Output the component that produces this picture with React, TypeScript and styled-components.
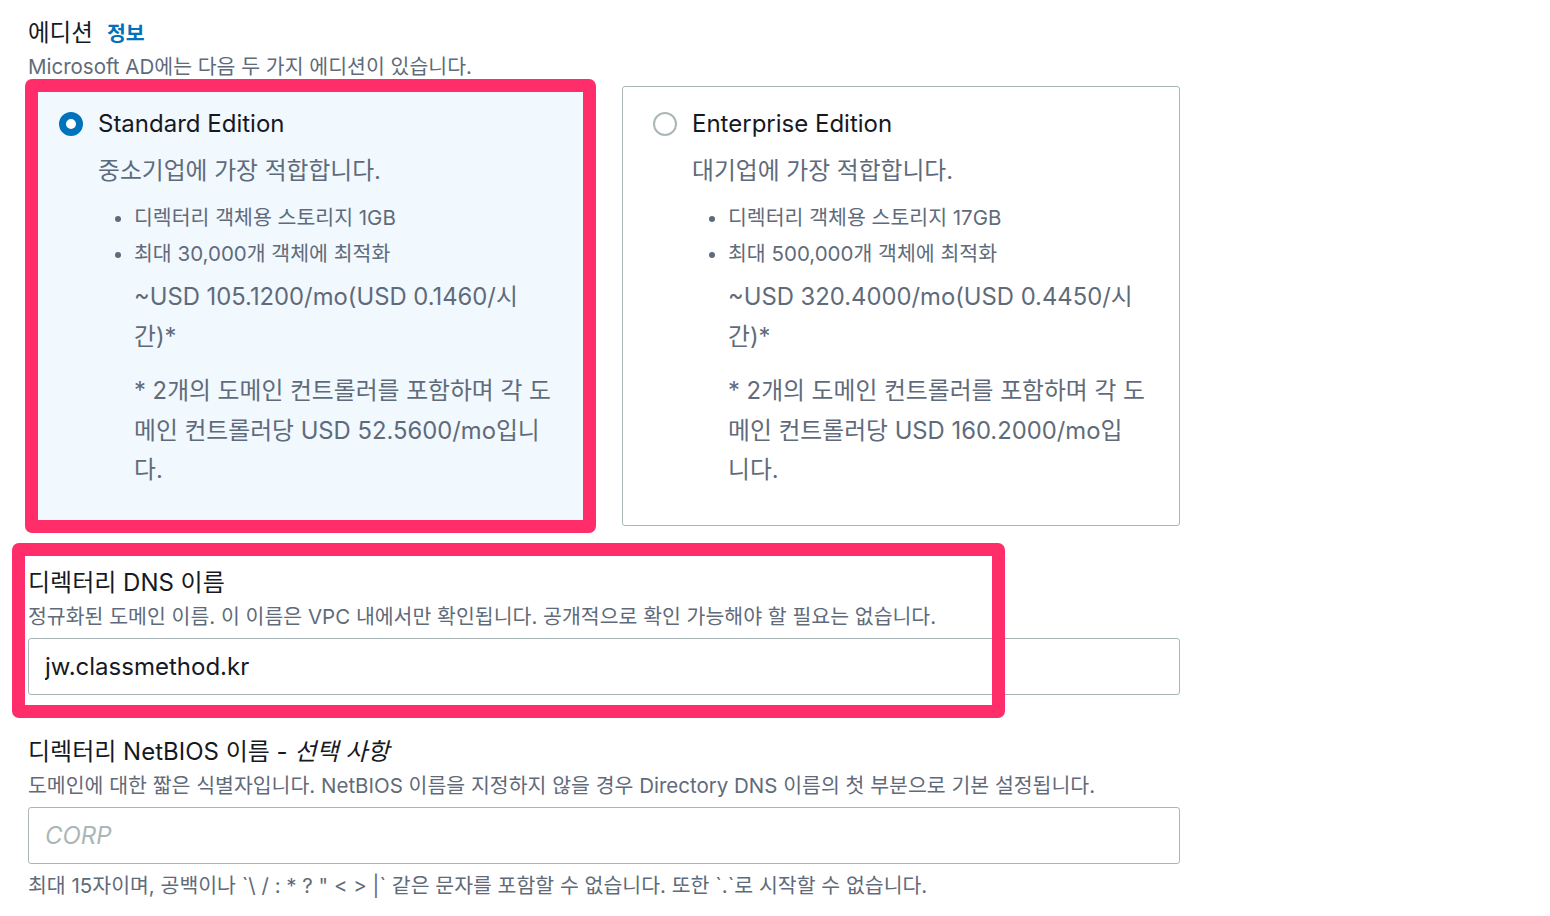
import React from "react";
import styled, { createGlobalStyle } from "styled-components";

const FONT = `"Inter", "Noto Sans CJK KR", sans-serif`;

const GlobalStyle = createGlobalStyle`
  html, body {
    margin: 0;
    padding: 0;
    background: #ffffff;
  }
  body {
    font-family: ${FONT};
    color: #16191f;
  }
  * { box-sizing: border-box; }
`;

const Page = styled.div`
  width: 1550px;
  padding: 18px 0 0 28px;
`;

const Column = styled.div`
  width: 1152px;
  display: flex;
  flex-direction: column;
`;

const HeadingRow = styled.div`
  display: flex;
  align-items: baseline;
  gap: 14px;
  height: 30px;
`;

const Heading = styled.span`
  font-size: 23.5px;
  line-height: 30px;
  color: #16191f;
`;

const InfoLink = styled.a`
  font-size: 20.5px;
  line-height: 30px;
  font-weight: 700;
  color: #0073bb;
  text-decoration: none;
`;

const Description = styled.div<{ $top?: number }>`
  font-size: 20.5px;
  line-height: 26px;
  color: #5f6b7a;
  margin-top: ${(p) => p.$top ?? 6}px;
`;

const CardGrid = styled.div`
  margin-top: 6px;
  display: grid;
  grid-template-columns: 558px 558px;
  column-gap: 36px;
`;

const CardSlot = styled.div`
  position: relative;
  display: flex;
`;

const Card = styled.div<{ $selected?: boolean }>`
  flex: 1;
  border: 1px solid ${(p) => (p.$selected ? "#0073bb" : "#aab7b8")};
  background: ${(p) => (p.$selected ? "#f1f8fe" : "#ffffff")};
  border-radius: 3px;
  padding: 21px 30px 35px 30px;
`;

const CardHeader = styled.div`
  display: flex;
  align-items: center;
  gap: 15px;
  height: 32px;
`;

const Radio = styled.span<{ $checked?: boolean }>`
  width: 24px;
  height: 24px;
  border-radius: 50%;
  flex: none;
  border: ${(p) => (p.$checked ? "7px solid #0073bb" : "2px solid #aab7b8")};
  background: #ffffff;
`;

const CardTitle = styled.span`
  font-size: 24px;
  line-height: 32px;
  color: #16191f;
`;

const CardBody = styled.div`
  padding-left: 39px;
`;

const Subtitle = styled.div`
  margin-top: 15px;
  font-size: 23.8px;
  line-height: 32px;
  color: #5f6b7a;
`;

const FeatureList = styled.ul`
  margin: 13px 0 0 0;
  padding: 0 0 0 36px;
  list-style: none;
`;

const Feature = styled.li`
  position: relative;
  font-size: 20.5px;
  line-height: 36px;
  color: #5f6b7a;
  &::before {
    content: "";
    position: absolute;
    left: -19px;
    top: 16px;
    width: 6px;
    height: 6px;
    border-radius: 50%;
    background: #5f6b7a;
  }
`;

const PriceText = styled.p<{ $top: number }>`
  margin: ${(p) => p.$top}px 0 0 36px;
  font-size: 23.8px;
  line-height: 39.5px;
  white-space: nowrap;
  color: #5f6b7a;
`;

const Highlight = styled.div<{
  $l: number;
  $t: number;
  $r: number;
  $b: number;
}>`
  position: absolute;
  left: ${(p) => p.$l}px;
  top: ${(p) => p.$t}px;
  right: ${(p) => p.$r}px;
  bottom: ${(p) => p.$b}px;
  border: 13px solid #ff2e6b;
  border-radius: 7px;
  pointer-events: none;
`;

const Field = styled.div<{ $top: number }>`
  position: relative;
  margin-top: ${(p) => p.$top}px;
  display: flex;
  flex-direction: column;
`;

const FieldLabel = styled.div`
  font-size: 24px;
  line-height: 30px;
  color: #16191f;
  em {
    font-style: italic;
  }
`;

const TextInput = styled.input`
  margin-top: 8px;
  width: 100%;
  height: 57px;
  border: 1px solid #aab7b8;
  border-radius: 3px;
  padding: 0 16px;
  font-family: ${FONT};
  font-size: 24px;
  color: #16191f;
  background: #ffffff;
  outline: none;
  &::placeholder {
    color: #aab7b8;
    font-style: italic;
  }
`;

const Constraint = styled.div`
  margin-top: 9px;
  font-size: 20.5px;
  line-height: 26px;
  color: #5f6b7a;
`;

type Edition = {
  name: string;
  fit: string;
  storage: string;
  objects: string;
  price: string[];
  note: string[];
  selected?: boolean;
};

const editions: Edition[] = [
  {
    name: "Standard Edition",
    fit: "중소기업에 가장 적합합니다.",
    storage: "디렉터리 객체용 스토리지 1GB",
    objects: "최대 30,000개 객체에 최적화",
    price: ["~USD 105.1200/mo(USD 0.1460/시", "간)*"],
    note: [
      "* 2개의 도메인 컨트롤러를 포함하며 각 도",
      "메인 컨트롤러당 USD 52.5600/mo입니",
      "다.",
    ],
    selected: true,
  },
  {
    name: "Enterprise Edition",
    fit: "대기업에 가장 적합합니다.",
    storage: "디렉터리 객체용 스토리지 17GB",
    objects: "최대 500,000개 객체에 최적화",
    price: ["~USD 320.4000/mo(USD 0.4450/시", "간)*"],
    note: [
      "* 2개의 도메인 컨트롤러를 포함하며 각 도",
      "메인 컨트롤러당 USD 160.2000/mo입",
      "니다.",
    ],
  },
];

function Lines({ lines }: { lines: string[] }) {
  return (
    <>
      {lines.map((l, i) => (
        <React.Fragment key={i}>
          {i > 0 && <br />}
          {l}
        </React.Fragment>
      ))}
    </>
  );
}

function EditionCard({ e }: { e: Edition }) {
  return (
    <CardSlot>
      <Card $selected={e.selected}>
        <CardHeader>
          <Radio $checked={e.selected} />
          <CardTitle>{e.name}</CardTitle>
        </CardHeader>
        <CardBody>
          <Subtitle>{e.fit}</Subtitle>
          <FeatureList>
            <Feature>{e.storage}</Feature>
            <Feature>{e.objects}</Feature>
          </FeatureList>
          <PriceText $top={5}>
            <Lines lines={e.price} />
          </PriceText>
          <PriceText $top={15}>
            <Lines lines={e.note} />
          </PriceText>
        </CardBody>
      </Card>
      {e.selected && <Highlight $l={-3} $t={-7} $r={-10} $b={-7} />}
    </CardSlot>
  );
}

export default function App() {
  return (
    <>
      <GlobalStyle />
      <Page>
        <Column>
          <HeadingRow>
            <Heading>에디션</Heading>
            <InfoLink href="#">정보</InfoLink>
          </HeadingRow>
          <Description $top={6}>
            Microsoft AD에는 다음 두 가지 에디션이 있습니다.
          </Description>
          <CardGrid>
            {editions.map((e) => (
              <EditionCard key={e.name} e={e} />
            ))}
          </CardGrid>

          <Field $top={42}>
            <FieldLabel>디렉터리 DNS 이름</FieldLabel>
            <Description>
              정규화된 도메인 이름. 이 이름은 VPC 내에서만 확인됩니다. 공개적으로 확인 가능해야 할 필요는 없습니다.
            </Description>
            <TextInput defaultValue="jw.classmethod.kr" />
            <Highlight $l={-16} $t={-25} $r={175} $b={-23} />
          </Field>

          <Field $top={42}>
            <FieldLabel>
              디렉터리 NetBIOS 이름 - <em>선택 사항</em>
            </FieldLabel>
            <Description>
              도메인에 대한 짧은 식별자입니다. NetBIOS 이름을 지정하지 않을 경우 Directory DNS 이름의 첫 부분으로 기본 설정됩니다.
            </Description>
            <TextInput placeholder="CORP" />
            <Constraint>
              최대 15자이며, 공백이나 `\ / : * ? " &lt; &gt; |` 같은 문자를 포함할 수 없습니다. 또한 `.`로 시작할 수 없습니다.
            </Constraint>
          </Field>
        </Column>
      </Page>
    </>
  );
}
